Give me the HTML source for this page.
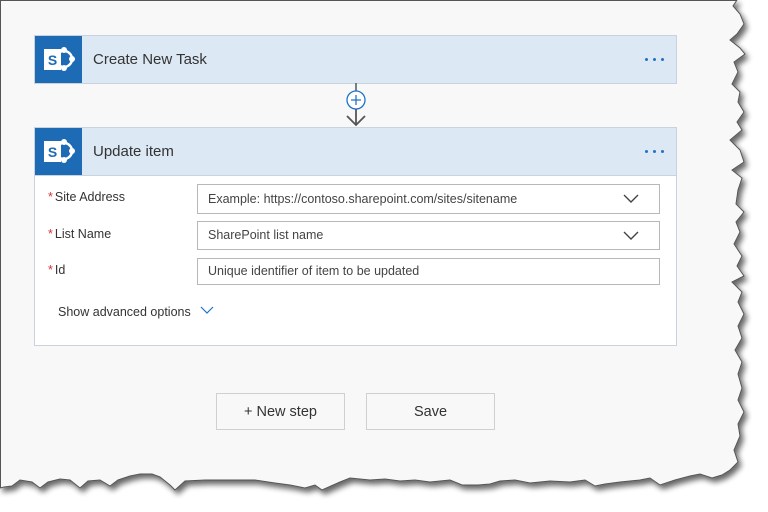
<!DOCTYPE html>
<html><head><meta charset="utf-8">
<style>
*{margin:0;padding:0;box-sizing:border-box}
body{width:768px;height:512px;background:#fff;position:relative;overflow:hidden;font-family:"Segoe UI","Liberation Sans",sans-serif;color:#333}
svg.paper{position:absolute;left:0;top:0}
.card{position:absolute;left:34px;width:643px;border:1px solid #c8d3df}
.hdr{height:48px;background:#dde8f5;position:relative}
.ic{position:absolute;left:0;top:0;width:47px;height:47px;background:#1c6bb4}
.title{position:absolute;left:58px;top:15px;font-size:15px;color:#333}
.dots{position:absolute;right:12px;top:22px;display:flex;height:3px}
.dots i{display:block;width:3px;height:3px;border-radius:50%;background:#1e73c8;margin-left:5px}
.body{background:#fff;height:170px;position:relative;border-top:1px solid #c8d3df}
.lbl{position:absolute;left:13px;font-size:12.5px;color:#333}
.lbl b{color:#d13438;font-weight:normal;margin-right:2px}
.inp{position:absolute;left:162px;width:463px;border:1px solid #b8b8b8;background:#fff;font-size:12.5px;color:#444;padding-left:10px}
.chev{position:absolute;right:20px;top:9px}
.btn{position:absolute;top:393px;width:129px;height:37px;border:1px solid #d0d0d0;background:#f8f8f8;font-size:14.5px;color:#333;text-align:center;line-height:36px}
</style></head><body>
<svg class="paper" width="768" height="512">
<defs><filter id="sh" x="-5%" y="-5%" width="115%" height="115%"><feGaussianBlur in="SourceAlpha" stdDeviation="3"/><feOffset dx="3" dy="4"/><feComponentTransfer><feFuncA type="linear" slope="0.6"/></feComponentTransfer><feMerge><feMergeNode/><feMergeNode in="SourceGraphic"/></feMerge></filter></defs>
<path filter="url(#sh)" fill="#f8f8f8" stroke="#555" stroke-width="1" d="M0,0 L737,0 L733,6 L740,14 L744,24 L737,34 L730,40 L740,48 L745,54 L734,62 L738,72 L732,84 L740,92 L738,102 L744,112 L737,122 L742,130 L730,140 L740,150 L744,162 L732,170 L742,178 L738,190 L736,204 L744,212 L736,222 L740,232 L734,244 L742,256 L737,266 L744,276 L732,282 L742,292 L738,302 L744,314 L738,326 L742,338 L735,350 L742,362 L738,374 L742,388 L738,400 L744,412 L738,424 L740,436 L734,450 L738,462 L730,470 L722,475 L712,478 L700,474 L690,476 L675,480 L660,485 L650,478 L640,480 L620,482 L605,484 L595,486 L585,480 L570,482 L550,481 L530,483 L515,480 L500,481 L490,484 L478,485 L462,485 L450,480 L430,482 L415,480 L400,481 L385,479 L370,480 L350,478 L340,482 L322,490 L315,485 L305,488 L290,485 L275,483 L255,480 L230,480 L205,480 L185,481 L175,490 L170,485 L160,477 L152,474 L140,474 L130,476 L118,480 L110,486 L100,480 L88,481 L80,488 L70,480 L60,479 L48,482 L40,488 L32,482 L20,480 L12,486 L4,487 L0,488 Z"/>
<line x1="0.5" y1="0" x2="0.5" y2="488" stroke="#555"/>
<line x1="0" y1="0.5" x2="737" y2="0.5" stroke="#555"/>
</svg>

<div class="card" style="top:35px">
 <div class="hdr" style="height:47px">
  <div class="ic"><svg width="47" height="47"><circle cx="29" cy="23" r="8" fill="none" stroke="#fff" stroke-width="2.5"/><circle cx="29" cy="14" r="3" fill="#fff"/><circle cx="37" cy="23" r="3" fill="#fff"/><circle cx="29" cy="32" r="3" fill="#fff"/><rect x="9" y="13" width="17" height="21" fill="#fff"/><text x="17.5" y="29" font-size="14" font-weight="bold" fill="#1c6bb4" text-anchor="middle" font-family="Liberation Sans">S</text></svg></div>
  <div class="title">Create New Task</div>
  <div class="dots"><i></i><i></i><i></i></div>
 </div>
</div>

<svg style="position:absolute;left:340px;top:83px" width="32" height="45">
<line x1="16" y1="0" x2="16" y2="8" stroke="#555" stroke-width="1.5"/>
<circle cx="16" cy="17" r="9" fill="#fff" stroke="#1e73c8" stroke-width="1.3"/>
<path d="M16 12v10M11 17h10" stroke="#1e73c8" stroke-width="1.3"/>
<line x1="16" y1="26" x2="16" y2="42" stroke="#555" stroke-width="1.8"/>
<path d="M7 33l9 9 9-9" fill="none" stroke="#555" stroke-width="1.8"/>
</svg>

<div class="card" style="top:127px">
 <div class="hdr" style="height:47px">
  <div class="ic"><svg width="47" height="47"><circle cx="29" cy="23" r="8" fill="none" stroke="#fff" stroke-width="2.5"/><circle cx="29" cy="14" r="3" fill="#fff"/><circle cx="37" cy="23" r="3" fill="#fff"/><circle cx="29" cy="32" r="3" fill="#fff"/><rect x="9" y="13" width="17" height="21" fill="#fff"/><text x="17.5" y="29" font-size="14" font-weight="bold" fill="#1c6bb4" text-anchor="middle" font-family="Liberation Sans">S</text></svg></div>
  <div class="title">Update item</div>
  <div class="dots"><i></i><i></i><i></i></div>
 </div>
 <div class="body">
  <div class="lbl" style="top:14px"><b>*</b>Site Address</div>
  <div class="inp" style="top:8px;height:30px;line-height:28px">Example: https://contoso.sharepoint.com/sites/sitename<svg class="chev" width="16" height="10"><path d="M1 1l7 7 7-7" fill="none" stroke="#444" stroke-width="1.4"/></svg></div>
  <div class="lbl" style="top:51px"><b>*</b>List Name</div>
  <div class="inp" style="top:45px;height:29px;line-height:27px">SharePoint list name<svg class="chev" width="16" height="10"><path d="M1 1l7 7 7-7" fill="none" stroke="#444" stroke-width="1.4"/></svg></div>
  <div class="lbl" style="top:87px"><b>*</b>Id</div>
  <div class="inp" style="top:82px;height:27px;line-height:25px">Unique identifier of item to be updated</div>
  <div class="lbl" style="top:129px;left:23px">Show advanced options <svg width="14" height="8" style="margin-left:6px;vertical-align:2px"><path d="M1 1l6 6 6-6" fill="none" stroke="#1e73c8" stroke-width="1.2"/></svg></div>
 </div>
</div>

<div class="btn" style="left:216px">+ New step</div>
<div class="btn" style="left:366px">Save</div>
</body></html>
